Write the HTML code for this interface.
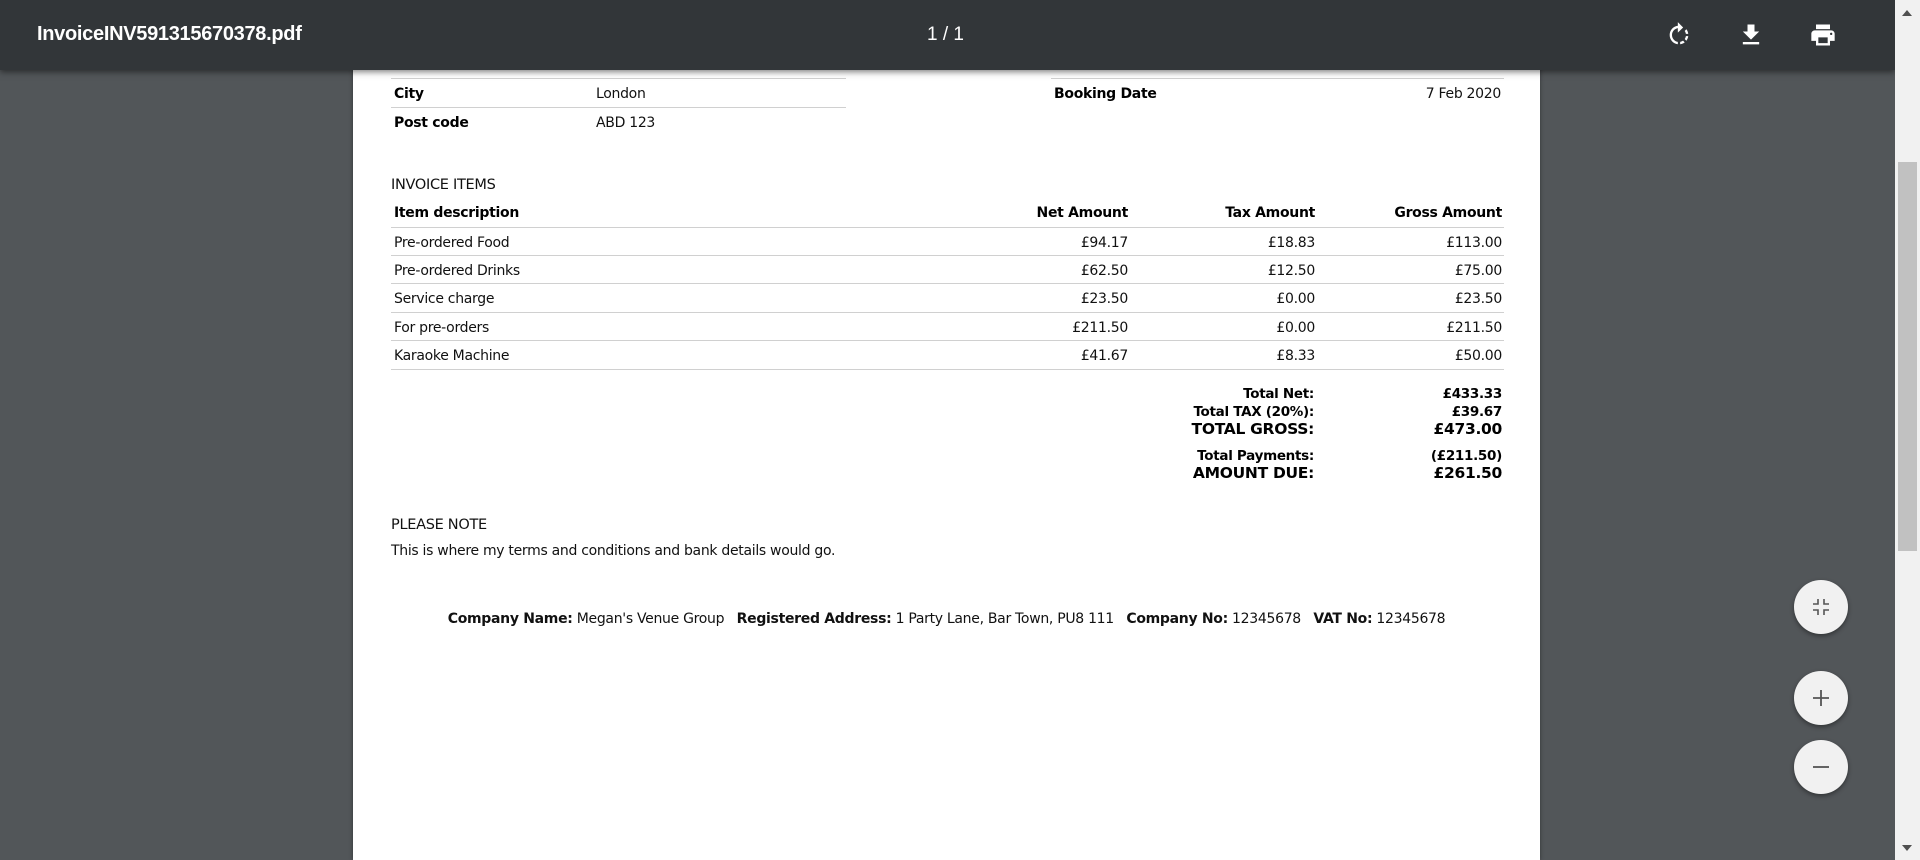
<!DOCTYPE html>
<html><head><meta charset="utf-8"><style>
*{margin:0;padding:0;box-sizing:border-box}
body{width:1920px;height:860px;overflow:hidden;background:#525659;font-family:"DejaVu Sans","Liberation Sans",sans-serif;position:relative}
.page{position:absolute;left:353px;top:0;width:1187px;height:860px;background:#fff;box-shadow:0 0 4px rgba(0,0,0,.4)}
.bar{position:absolute;left:0;top:0;width:1895px;height:70px;background:#323639;box-shadow:0 2px 6px rgba(0,0,0,.5);color:#fff;font-family:"Liberation Sans",sans-serif}
.t{position:absolute;font-size:14px;color:#111;white-space:nowrap;line-height:16px;letter-spacing:-0.3px}
.b{font-weight:bold;color:#000}
.r{text-align:right}
.ln{position:absolute;height:1px;background:#d0d0d0}
.sb{position:absolute;left:1895px;top:0;width:25px;height:860px;background:#f1f1f1}
.fab{position:absolute;left:1794px;width:54px;height:54px;border-radius:50%;background:#f1f1f1;box-shadow:0 2px 5px rgba(0,0,0,.4)}
</style></head><body>
<div class="page">
<div class="ln" style="left:38px;top:78px;width:455px"></div>
<div class="ln" style="left:38px;top:107px;width:455px"></div>
<div class="ln" style="left:698px;top:78px;width:453px"></div>
<div class="t b" style="left:41px;top:86px">City</div>
<div class="t" style="left:243px;top:86px">London</div>
<div class="t b" style="left:41px;top:115px">Post code</div>
<div class="t" style="left:243px;top:115px">ABD 123</div>
<div class="t b" style="left:701px;top:86px">Booking Date</div>
<div class="t r" style="left:948px;width:200px;top:86px">7 Feb 2020</div>
<div class="t" style="left:38px;top:177px;font-size:14.5px">INVOICE ITEMS</div>
<div class="t b" style="left:41px;top:205px">Item description</div>
<div class="t b r" style="left:575px;width:200px;top:205px">Net Amount</div>
<div class="t b r" style="left:762px;width:200px;top:205px">Tax Amount</div>
<div class="t b r" style="left:949px;width:200px;top:205px">Gross Amount</div>
<div class="ln" style="left:38px;top:227px;width:1113px"></div>
<div class="ln" style="left:38px;top:255px;width:1113px"></div>
<div class="ln" style="left:38px;top:283px;width:1113px"></div>
<div class="ln" style="left:38px;top:312px;width:1113px"></div>
<div class="ln" style="left:38px;top:340px;width:1113px"></div>
<div class="ln" style="left:38px;top:369px;width:1113px"></div>
<div class="t" style="left:41px;top:235px">Pre-ordered Food</div><div class="t r" style="left:575px;width:200px;top:235px">£94.17</div><div class="t r" style="left:762px;width:200px;top:235px">£18.83</div><div class="t r" style="left:949px;width:200px;top:235px">£113.00</div>
<div class="t" style="left:41px;top:263px">Pre-ordered Drinks</div><div class="t r" style="left:575px;width:200px;top:263px">£62.50</div><div class="t r" style="left:762px;width:200px;top:263px">£12.50</div><div class="t r" style="left:949px;width:200px;top:263px">£75.00</div>
<div class="t" style="left:41px;top:291px">Service charge</div><div class="t r" style="left:575px;width:200px;top:291px">£23.50</div><div class="t r" style="left:762px;width:200px;top:291px">£0.00</div><div class="t r" style="left:949px;width:200px;top:291px">£23.50</div>
<div class="t" style="left:41px;top:320px">For pre-orders</div><div class="t r" style="left:575px;width:200px;top:320px">£211.50</div><div class="t r" style="left:762px;width:200px;top:320px">£0.00</div><div class="t r" style="left:949px;width:200px;top:320px">£211.50</div>
<div class="t" style="left:41px;top:348px">Karaoke Machine</div><div class="t r" style="left:575px;width:200px;top:348px">£41.67</div><div class="t r" style="left:762px;width:200px;top:348px">£8.33</div><div class="t r" style="left:949px;width:200px;top:348px">£50.00</div>
<div class="t b r" style="left:761px;width:200px;top:386px;font-size:13.5px">Total Net:</div><div class="t b r" style="left:949px;width:200px;top:386px;font-size:13.5px">£433.33</div>
<div class="t b r" style="left:761px;width:200px;top:404px;font-size:13.5px">Total TAX (20%):</div><div class="t b r" style="left:949px;width:200px;top:404px;font-size:13.5px">£39.67</div>
<div class="t b r" style="left:761px;width:200px;top:421px;font-size:15.5px">TOTAL GROSS:</div><div class="t b r" style="left:949px;width:200px;top:421px;font-size:15.5px">£473.00</div>
<div class="t b r" style="left:761px;width:200px;top:448px;font-size:13.5px">Total Payments:</div><div class="t b r" style="left:949px;width:200px;top:448px;font-size:13.5px">(£211.50)</div>
<div class="t b r" style="left:761px;width:200px;top:465px;font-size:15.5px">AMOUNT DUE:</div><div class="t b r" style="left:949px;width:200px;top:465px;font-size:15.5px">£261.50</div>
<div class="t" style="left:38px;top:517px;font-size:14.5px">PLEASE NOTE</div>
<div class="t" style="left:38px;top:543px">This is where my terms and conditions and bank details would go.</div>
<div class="t" style="left:0;width:1187px;text-align:center;top:611px"><b>Company Name:</b> Megan's Venue Group &nbsp;&nbsp;<b>Registered Address:</b> 1 Party Lane, Bar Town, PU8 111 &nbsp;&nbsp;<b>Company No:</b> 12345678 &nbsp;&nbsp;<b>VAT No:</b> 12345678</div>
</div>
<div class="bar">
<div style="position:absolute;left:37px;top:23px;font-size:20px;font-weight:bold;letter-spacing:-0.3px">InvoiceINV591315670378.pdf</div>
<div style="position:absolute;left:927px;top:24px;font-size:19px">1 / 1</div>
<svg style="position:absolute;left:1665px;top:21px" width="28" height="28" viewBox="0 0 24 24" fill="#fff"><path d="M15.55 5.55L11 1v3.07C7.06 4.56 4 7.92 4 12s3.05 7.44 7 7.93v-2.02c-2.84-.48-5-2.94-5-5.91s2.16-5.43 5-5.91V10l4.55-4.45zM19.93 11c-.17-1.39-.72-2.73-1.62-3.89l-1.42 1.42c.54.75.88 1.6 1.02 2.47h2.02zM13 17.9v2.02c1.39-.17 2.74-.71 3.9-1.61l-1.44-1.44c-.75.54-1.59.89-2.46 1.03zm3.89-2.42l1.42 1.41c.9-1.16 1.45-2.5 1.62-3.89h-2.02c-.14.87-.48 1.72-1.02 2.48z"/></svg>
<svg style="position:absolute;left:1737px;top:21px" width="28" height="28" viewBox="0 0 24 24" fill="#fff"><path d="M19 9h-4V3H9v6H5l7 7 7-7zM5 18v2h14v-2H5z"/></svg>
<svg style="position:absolute;left:1809px;top:21px" width="28" height="28" viewBox="0 0 24 24" fill="#fff"><path d="M19 8H5c-1.66 0-3 1.34-3 3v6h4v4h12v-4h4v-6c0-1.66-1.34-3-3-3zm-3 11H8v-5h8v5zm3-7c-.55 0-1-.45-1-1s.45-1 1-1 1 .45 1 1-.45 1-1 1zm-1-9H6v4h12V3z"/></svg>
</div>
<div class="sb"><div style="position:absolute;left:3px;top:162px;width:19px;height:389px;background:#c1c1c1"></div>
<div style="position:absolute;left:7px;top:10px;border:5px solid transparent;border-bottom:6px solid #505050;border-top:0"></div>
<div style="position:absolute;left:7px;top:845px;border:5px solid transparent;border-top:6px solid #505050;border-bottom:0"></div></div>
<div class="fab" style="top:580px"><svg width="54" height="54" viewBox="0 0 54 54" fill="none" stroke="#555" stroke-width="1.6"><path d="M24 19v5h-5M30 19v5h5M24 35v-5h-5M30 35v-5h5"/></svg></div>
<div class="fab" style="top:671px"><svg width="54" height="54" viewBox="0 0 54 54" stroke="#555" stroke-width="1.8"><path d="M27 19v16M19 27h16"/></svg></div>
<div class="fab" style="top:740px"><svg width="54" height="54" viewBox="0 0 54 54" stroke="#555" stroke-width="1.8"><path d="M19 27h16"/></svg></div>
</body></html>
